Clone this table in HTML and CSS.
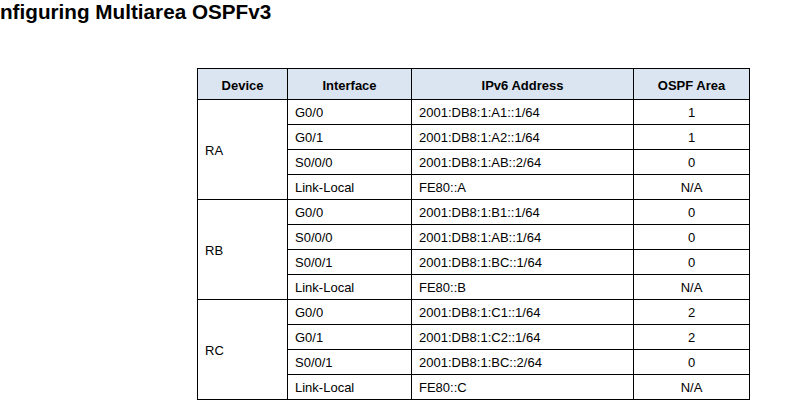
FILE: index.html
```html
<!DOCTYPE html>
<html>
<head>
<meta charset="utf-8">
<link rel="stylesheet" href="styles.css">
</head>
<body>
<h1 class="title">Configuring Multiarea OSPFv3</h1>
<table class="addr">
  <colgroup>
    <col class="c-dev"><col class="c-if"><col class="c-ip"><col class="c-area">
  </colgroup>
  <thead>
    <tr><th>Device</th><th>Interface</th><th>IPv6 Address</th><th>OSPF Area</th></tr>
  </thead>
  <tbody>
    <tr><td class="dev" rowspan="4">RA</td><td>G0/0</td><td>2001:DB8:1:A1::1/64</td><td class="area">1</td></tr>
    <tr><td>G0/1</td><td>2001:DB8:1:A2::1/64</td><td class="area">1</td></tr>
    <tr><td>S0/0/0</td><td>2001:DB8:1:AB::2/64</td><td class="area">0</td></tr>
    <tr><td>Link-Local</td><td>FE80::A</td><td class="area">N/A</td></tr>
    <tr><td class="dev" rowspan="4">RB</td><td>G0/0</td><td>2001:DB8:1:B1::1/64</td><td class="area">0</td></tr>
    <tr><td>S0/0/0</td><td>2001:DB8:1:AB::1/64</td><td class="area">0</td></tr>
    <tr><td>S0/0/1</td><td>2001:DB8:1:BC::1/64</td><td class="area">0</td></tr>
    <tr><td>Link-Local</td><td>FE80::B</td><td class="area">N/A</td></tr>
    <tr><td class="dev" rowspan="4">RC</td><td>G0/0</td><td>2001:DB8:1:C1::1/64</td><td class="area">2</td></tr>
    <tr><td>G0/1</td><td>2001:DB8:1:C2::1/64</td><td class="area">2</td></tr>
    <tr><td>S0/0/1</td><td>2001:DB8:1:BC::2/64</td><td class="area">0</td></tr>
    <tr><td>Link-Local</td><td>FE80::C</td><td class="area">N/A</td></tr>
  </tbody>
</table>
</body>
</html>
```
FILE: styles.css
```css
html, body {
  margin: 0;
  padding: 0;
  background: #ffffff;
  overflow: hidden;
}
body {
  font-family: "Liberation Sans", Arial, sans-serif;
  color: #000000;
}
.title {
  margin: 0 0 0 -27.6px;
  font-size: 20.7px;
  line-height: 24px;
  font-weight: bold;
  white-space: nowrap;
}
.addr {
  margin: 44px 0 0 197px;
  border-collapse: collapse;
  table-layout: fixed;
  width: 553px;
  font-size: 13px;
}
.c-dev { width: 90px; }
.c-if { width: 124px; }
.c-ip { width: 222px; }
.c-area { width: 116px; }
.addr th, .addr td {
  border: 1px solid #000000;
  padding: 1px 0 0 7px;
  text-align: left;
  height: 25px;
  line-height: 15px;
  vertical-align: middle;
  box-sizing: border-box;
}
.addr th {
  background: #dbe5f1;
  font-weight: bold;
  text-align: center;
  padding: 2px 0 0 0;
  height: 31px;
}
.addr td.area {
  text-align: center;
  padding: 1px 0 0 0;
}
```
